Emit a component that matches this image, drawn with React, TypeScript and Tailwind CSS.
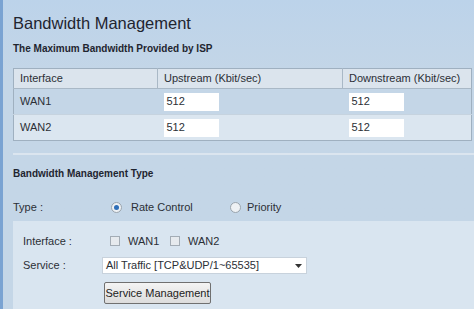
export default function App() {
  return (
    <div className="w-[474px] h-[309px] overflow-hidden bg-gradient-to-b from-[#bcd3ea] to-[#c4d6e7] to-[25%] border-l-[3px] border-[#7aa3d2] font-['Liberation_Sans',Arial,sans-serif] text-[#2b2f36]">
      <div className="pl-[10px] pt-[12px]">
        {/* Title */}
        <h1 className="text-[16.5px] leading-[22px] text-[#1f2530]">Bandwidth Management</h1>
        <h2 className="mt-[8px] text-[10px] leading-[14px] font-bold text-[#1f2530]">
          The Maximum Bandwidth Provided by ISP
        </h2>

        {/* ISP table */}
        <table className="mt-[12px] w-[459px] border border-[#9fb0c0] border-collapse text-[11px] text-left">
          <thead className="bg-[#dbe4ed]">
            <tr className="h-[20px]">
              <th className="w-[144px] px-[6px] font-normal border-r border-[#a9b8c6]">Interface</th>
              <th className="w-[185px] px-[6px] font-normal border-r border-[#a9b8c6]">Upstream (Kbit/sec)</th>
              <th className="px-[6px] font-normal">Downstream (Kbit/sec)</th>
            </tr>
          </thead>
          <tbody>
            <tr className="h-[26px] bg-[#c4d6e7] border-t border-[#a9b8c6]">
              <td className="px-[6px]">WAN1</td>
              <td className="px-[6px]">
                <div className="w-[55px] h-[18px] bg-white flex items-center px-[3px]">512</div>
              </td>
              <td className="px-[6px]">
                <div className="w-[55px] h-[18px] bg-white flex items-center px-[3px]">512</div>
              </td>
            </tr>
            <tr className="h-[26px] bg-[#dbe6f0] border-t border-[#c6d3df]">
              <td className="px-[6px]">WAN2</td>
              <td className="px-[6px]">
                <div className="w-[55px] h-[18px] bg-white flex items-center px-[3px]">512</div>
              </td>
              <td className="px-[6px]">
                <div className="w-[55px] h-[18px] bg-white flex items-center px-[3px]">512</div>
              </td>
            </tr>
          </tbody>
        </table>

        {/* separator */}
        <div className="mt-[12px] h-[2px] bg-[#dbe5ef]" />

        <h2 className="mt-[12px] text-[10px] leading-[14px] font-bold text-[#1f2530]">
          Bandwidth Management Type
        </h2>

        {/* Type row */}
        <div className="mt-[18px] h-[16px] flex items-center text-[11px]">
          <span className="w-[98px]">Type :</span>
          <span className="w-[11px] h-[11px] rounded-full border border-[#9aa4ad] bg-[#eef1f4] flex items-center justify-center">
            <span className="w-[5px] h-[5px] rounded-full bg-[#2f6fb8]" />
          </span>
          <span className="ml-[9px] w-[99px]">Rate Control</span>
          <span className="w-[11px] h-[11px] rounded-full border border-[#9aa4ad] bg-[#eef1f4]" />
          <span className="ml-[6px]">Priority</span>
        </div>

        {/* Lower panel */}
        <div className="mt-[6px] h-[100px] bg-[#d9e5f0] pl-[10px] pt-[12px] text-[11px]">
          <div className="h-[16px] flex items-center">
            <span className="w-[87px]">Interface :</span>
            <span className="w-[10px] h-[10px] border border-[#a3acb5] bg-[#e6eaee]" />
            <span className="ml-[8px] w-[42px]">WAN1</span>
            <span className="w-[10px] h-[10px] border border-[#a3acb5] bg-[#e6eaee]" />
            <span className="ml-[8px]">WAN2</span>
          </div>
          <div className="mt-[8px] h-[17px] flex items-center">
            <span className="w-[79px]">Service :</span>
            <div className="w-[205px] h-[17px] bg-white border border-[#c8d2dc] flex items-center justify-between pl-[3px] pr-[4px]">
              <span>All Traffic [TCP&amp;UDP/1~65535]</span>
              <svg width="7" height="4" viewBox="0 0 7 4">
                <path d="M0 0 L7 0 L3.5 4 Z" fill="#333" />
              </svg>
            </div>
          </div>
          <div className="mt-[8px] pl-[81px]">
            <button className="w-[107px] h-[22px] border border-[#707070] rounded-[2px] bg-gradient-to-b from-[#f4f4f4] to-[#dcdcdc] text-[11px] text-[#222]">
              Service Management
            </button>
          </div>
        </div>
      </div>
    </div>
  );
}
